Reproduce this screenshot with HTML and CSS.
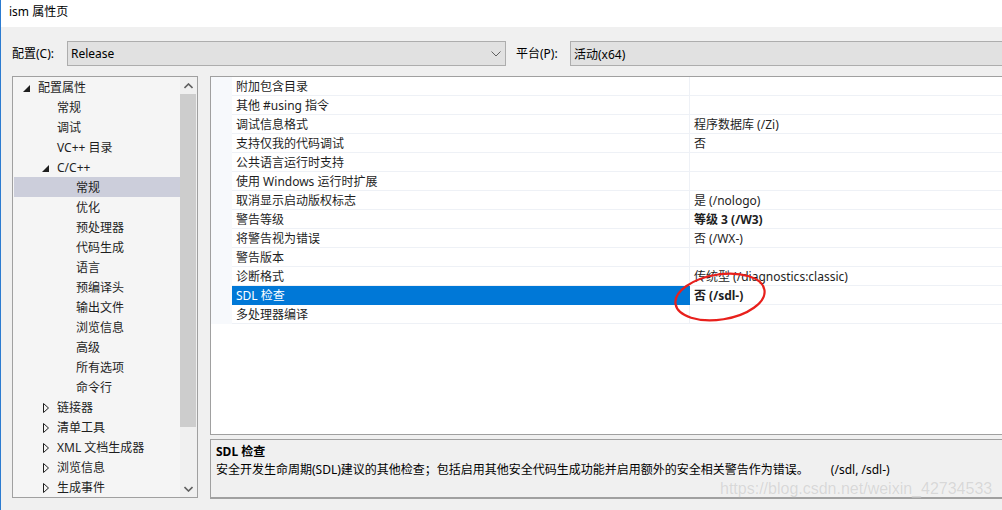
FILE: index.html
```html
<!DOCTYPE html>
<html lang="zh-CN">
<head>
<meta charset="utf-8">
<title>ism 属性页</title>
<link rel="stylesheet" href="styles.css">
</head>
<body>
<div class="window">
  <div class="titlebar">ism 属性页</div>
  <div class="config-row">
    <span class="lbl lbl-config">配置(C):</span>
    <div class="combo combo-config">
      <span>Release</span>
      <svg class="chev" width="10" height="6" viewBox="0 0 10 6"><polyline points="0.5,0.5 5,5 9.5,0.5" fill="none" stroke="#606060" stroke-width="1"/></svg>
    </div>
    <span class="lbl lbl-platform">平台(P):</span>
    <div class="combo combo-platform"><span>活动(x64)</span></div>
  </div>
  <div class="main">
    <div class="tree">
      <ul class="tree-list">
        <li class="l0"><span class="tw exp"><svg width="7" height="7" viewBox="0 0 7 7"><polygon points="7,0 7,7 0,7" fill="#1e1e1e"/></svg></span>配置属性</li>
        <li class="l1">常规</li>
        <li class="l1">调试</li>
        <li class="l1">VC++ 目录</li>
        <li class="l1 has"><span class="tw exp"><svg width="7" height="7" viewBox="0 0 7 7"><polygon points="7,0 7,7 0,7" fill="#1e1e1e"/></svg></span>C/C++</li>
        <li class="l2 sel">常规</li>
        <li class="l2">优化</li>
        <li class="l2">预处理器</li>
        <li class="l2">代码生成</li>
        <li class="l2">语言</li>
        <li class="l2">预编译头</li>
        <li class="l2">输出文件</li>
        <li class="l2">浏览信息</li>
        <li class="l2">高级</li>
        <li class="l2">所有选项</li>
        <li class="l2">命令行</li>
        <li class="l1 has"><span class="tw col"><svg width="6" height="10" viewBox="0 0 6 10"><polygon points="0.5,0.5 5.5,5 0.5,9.5" fill="none" stroke="#1e1e1e" stroke-width="1"/></svg></span>链接器</li>
        <li class="l1 has"><span class="tw col"><svg width="6" height="10" viewBox="0 0 6 10"><polygon points="0.5,0.5 5.5,5 0.5,9.5" fill="none" stroke="#1e1e1e" stroke-width="1"/></svg></span>清单工具</li>
        <li class="l1 has"><span class="tw col"><svg width="6" height="10" viewBox="0 0 6 10"><polygon points="0.5,0.5 5.5,5 0.5,9.5" fill="none" stroke="#1e1e1e" stroke-width="1"/></svg></span>XML 文档生成器</li>
        <li class="l1 has"><span class="tw col"><svg width="6" height="10" viewBox="0 0 6 10"><polygon points="0.5,0.5 5.5,5 0.5,9.5" fill="none" stroke="#1e1e1e" stroke-width="1"/></svg></span>浏览信息</li>
        <li class="l1 has"><span class="tw col"><svg width="6" height="10" viewBox="0 0 6 10"><polygon points="0.5,0.5 5.5,5 0.5,9.5" fill="none" stroke="#1e1e1e" stroke-width="1"/></svg></span>生成事件</li>
      </ul>
      <div class="vscroll">
        <div class="sbtn"><svg width="9" height="6" viewBox="0 0 9 6"><polyline points="0.5,5 4.5,1 8.5,5" fill="none" stroke="#606060" stroke-width="1.6"/></svg></div>
        <div class="thumb"></div>
        <div class="strack"></div>
        <div class="sbtn"><svg width="9" height="6" viewBox="0 0 9 6"><polyline points="0.5,1 4.5,5 8.5,1" fill="none" stroke="#606060" stroke-width="1.6"/></svg></div>
      </div>
    </div>
    <div class="right">
      <div class="grid">
        <div class="row"><div class="gut"></div><div class="name">附加包含目录</div><div class="val"></div></div>
        <div class="row"><div class="gut"></div><div class="name">其他 #using 指令</div><div class="val"></div></div>
        <div class="row"><div class="gut"></div><div class="name">调试信息格式</div><div class="val">程序数据库 (/Zi)</div></div>
        <div class="row"><div class="gut"></div><div class="name">支持仅我的代码调试</div><div class="val">否</div></div>
        <div class="row"><div class="gut"></div><div class="name">公共语言运行时支持</div><div class="val"></div></div>
        <div class="row"><div class="gut"></div><div class="name">使用 Windows 运行时扩展</div><div class="val"></div></div>
        <div class="row"><div class="gut"></div><div class="name">取消显示启动版权标志</div><div class="val">是 (/nologo)</div></div>
        <div class="row"><div class="gut"></div><div class="name">警告等级</div><div class="val bold">等级 3 (/W3)</div></div>
        <div class="row"><div class="gut"></div><div class="name">将警告视为错误</div><div class="val">否 (/WX-)</div></div>
        <div class="row"><div class="gut"></div><div class="name">警告版本</div><div class="val"></div></div>
        <div class="row"><div class="gut"></div><div class="name">诊断格式</div><div class="val">传统型 (/diagnostics:classic)</div></div>
        <div class="row selected"><div class="gut"></div><div class="name">SDL 检查</div><div class="val bold">否 (/sdl-)</div></div>
        <div class="row"><div class="gut"></div><div class="name">多处理器编译</div><div class="val"></div></div>
      </div>
      <div class="desc">
        <div class="desc-title">SDL 检查</div>
        <div class="desc-text">安全开发生命周期(SDL)建议的其他检查；包括启用其他安全代码生成功能并启用额外的安全相关警告作为错误。<span class="flags">(/sdl, /sdl-)</span></div>
      </div>
    </div>
  </div>
  <svg class="annot" width="104" height="62" viewBox="0 0 104 62"><ellipse cx="52" cy="31" rx="45" ry="22.5" transform="rotate(-9 52 31)" fill="none" stroke="#e8201c" stroke-width="2.2"/></svg>
  <div class="watermark">https://blog.csdn.net/weixin_42734533</div>
</div>
</body>
</html>
```

FILE: styles.css
```css
* { box-sizing: border-box; }
html, body { margin: 0; padding: 0; }
body {
  width: 1002px;
  height: 510px;
  overflow: hidden;
  background: #f0f0f0;
  font-family: "Noto Sans", "Noto Sans CJK SC", sans-serif;
  font-size: 12px;
  color: #1e1e1e;
}
.window {
  position: relative;
  width: 1002px;
  height: 510px;
  border-left: 1px solid #2b7bd0;
  overflow: hidden;
}
.titlebar {
  height: 27px;
  background: #ffffff;
  padding-left: 8px;
  line-height: 24px;
  color: #000;
}
.config-row {
  display: flex;
  align-items: center;
  height: 25px;
  margin-top: 14px;
  padding-left: 11px;
}
.lbl { line-height: 25px; color: #000; flex-shrink: 0; }
.lbl-config { width: 55px; }
.lbl-platform { width: 54px; margin-left: 10px; }
.combo {
  height: 25px;
  background: #e1e1e1;
  border: 1px solid #adadad;
  display: flex;
  align-items: center;
  padding-left: 3px;
  color: #000;
  flex-shrink: 0;
}
.combo-config { width: 439px; }
.combo-config .chev { margin-left: auto; margin-right: 4px; }
.combo-platform { width: 440px; }
.main {
  display: flex;
  margin-top: 10px;
  padding-left: 11px;
  gap: 12px;
}
.tree {
  width: 186px;
  height: 422px;
  border: 1px solid #a0a0a0;
  background: #f5f5f5;
  display: flex;
  flex-shrink: 0;
}
.tree-list {
  list-style: none;
  margin: 0;
  padding: 0;
  flex: 1;
  padding-left: 1px;
}
.tree-list li {
  height: 20px;
  line-height: 20px;
  padding-top: 1px;
  white-space: nowrap;
  position: relative;
  color: #1e1e1e;
}
.tree-list .l0 { padding-left: 24px; }
.tree-list .l1 { padding-left: 43px; }
.tree-list .l2 { padding-left: 62px; }
.tree-list li.sel { background: #cccedb; }
.tw {
  position: absolute;
  top: 1px;
  height: 20px;
  display: flex;
  align-items: center;
}
.l0 .tw { left: 9px; }
.l1 .tw.exp { left: 28px; }
.l1 .tw.col { left: 29px; }
.vscroll {
  width: 17px;
  display: flex;
  flex-direction: column;
  background: #f0f0f0;
}
.sbtn {
  height: 17px;
  display: flex;
  align-items: center;
  justify-content: center;
  flex-shrink: 0;
}
.thumb {
  height: 333px;
  background: #cdcdcd;
  margin: 0 1px 0 0;
  flex-shrink: 0;
}
.strack { flex: 1; }
.right {
  display: flex;
  flex-direction: column;
  gap: 4px;
  width: 820px;
  flex-shrink: 0;
}
.grid {
  height: 359px;
  background: #ffffff;
  border-top: 1px solid #a0a0a0;
  border-left: 1px solid #a0a0a0;
  border-bottom: 1px solid #a0a0a0;
}
.row {
  display: flex;
  height: 19px;
}
.gut {
  width: 21px;
  background: #f7f9fc;
  flex-shrink: 0;
}
.name {
  width: 458px;
  flex-shrink: 0;
  padding-left: 4px;
  padding-top: 1px;
  line-height: 18px;
  border-bottom: 1px solid #eef1f6;
  border-right: 1px solid #eef1f6;
  white-space: nowrap;
  color: #1e1e1e;
}
.val {
  flex: 1;
  padding-left: 4px;
  padding-top: 1px;
  line-height: 18px;
  border-bottom: 1px solid #eef1f6;
  white-space: nowrap;
  color: #1e1e1e;
}
.val.bold { font-weight: bold; }
.row.selected .name {
  background: #0078d7;
  color: #ffffff;
  border-color: #0078d7;
}
.desc {
  height: 60px;
  border-top: 1px solid #a0a0a0;
  border-left: 1px solid #a0a0a0;
  border-bottom: 2px solid #a0a0a0;
  background: #f0f0f0;
  padding: 3px 0 0 5px;
}
.desc-title {
  font-weight: bold;
  line-height: 18px;
  color: #000;
}
.desc-text {
  line-height: 18px;
  color: #000;
  white-space: nowrap;
}
.flags { margin-left: 22px; }
.annot {
  position: absolute;
  left: 667px;
  top: 266px;
}
.watermark {
  position: absolute;
  left: 719px;
  top: 480px;
  font-family: "Liberation Sans", sans-serif;
  font-size: 16px;
  color: rgba(212, 212, 212, 0.9);
  text-shadow: 0 0 1px rgba(255,255,255,0.6);
  white-space: nowrap;
}
```
